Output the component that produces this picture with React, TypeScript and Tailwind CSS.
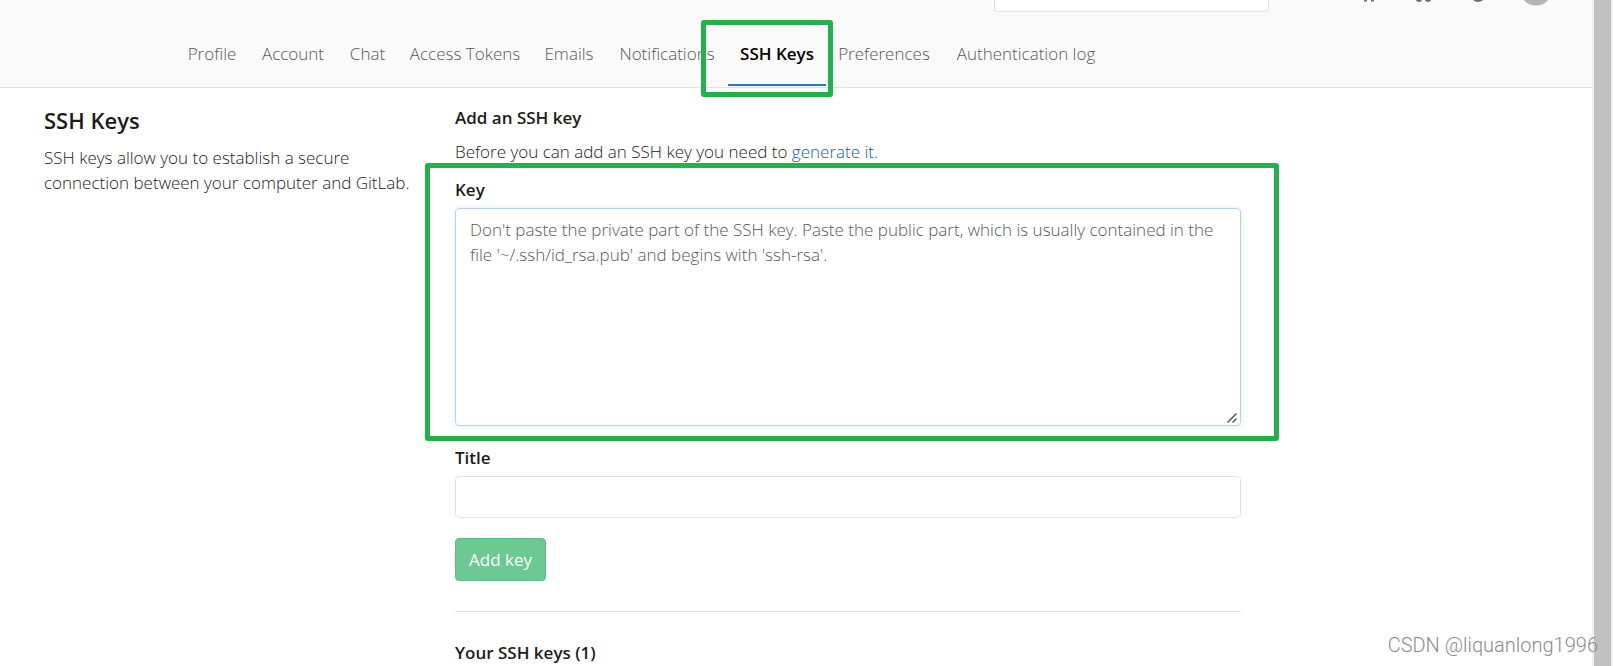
import type { ReactNode } from 'react'

const tabs = [
  { label: 'Profile', width: 'w-[74px]' },
  { label: 'Account', width: 'w-[88px]' },
  { label: 'Chat', width: 'w-[61px]' },
  { label: 'Access Tokens', width: 'w-[134px]' },
  { label: 'Emails', width: 'w-[74px]' },
  { label: 'Notifications', width: 'w-[122px]' },
  { label: 'SSH Keys', width: 'w-[98px]', active: true },
  { label: 'Preferences', width: 'w-[116px]' },
  { label: 'Authentication log', width: 'w-[168px]' },
]

export default function App() {
  return (
    <div className="flex min-h-screen bg-white font-['Segoe_UI','Open_Sans',sans-serif] text-[17px] font-light leading-[25px] text-[#1c1c1c]">
      <div className="relative min-w-0 flex-1">
        <header className="border-b border-[#e1e1e1] bg-[#fafafa]">
          <TopBar />
          <nav className="flex h-[75px] pl-[175px]">
            {tabs.map((tab) => (
              <a
                key={tab.label}
                href="#"
                className={`relative flex shrink-0 justify-center whitespace-nowrap pt-[29px] ${tab.width} ${
                  tab.active ? 'font-semibold text-black' : 'text-[#585858]'
                }`}
              >
                {tab.label}
                {tab.active && (
                  <>
                    <span className="absolute inset-x-0 bottom-px h-0.5 bg-[#1f78d1]" />
                    <Highlight className="-bottom-2.5 -left-[27px] -right-[7px] top-2" />
                  </>
                )}
              </a>
            ))}
          </nav>
        </header>

        <main className="flex pl-11">
          <section className="w-[411px] shrink-0 pt-[18px]">
            <h4 className="text-[22px] font-semibold leading-7">SSH Keys</h4>
            <p className="mt-[11px] w-[380px]">
              SSH keys allow you to establish a secure connection between your
              computer and GitLab.
            </p>
          </section>
          <section className="w-[786px] pt-[17px]">
            <h5 className="font-semibold">Add an SSH key</h5>
            <p className="mt-[9px]">
              Before you can add an SSH key you need to{' '}
              <a href="#" className="text-[#0f5cad]">
                generate it.
              </a>
            </p>
            <form>
              <div className="relative mt-[13px]">
                <Label htmlFor="key">Key</Label>
                <textarea
                  id="key"
                  className="mt-1.5 block h-[218px] w-full resize-none rounded-sm border border-[#b3d4f1] px-3.5 py-2 shadow-[0_0_4px_#d9e9f7] outline-none placeholder:text-[#585858]"
                  placeholder="Don't paste the private part of the SSH key. Paste the public part, which is usually contained in the file '~/.ssh/id_rsa.pub' and begins with 'ssh-rsa'."
                />
                <ResizeGrip />
                <Highlight className="-bottom-[15px] -left-[30px] -right-[38px] -top-3.5" />
              </div>
              <div className="mt-[19px]">
                <Label htmlFor="title">Title</Label>
                <input
                  id="title"
                  type="text"
                  className="mt-1.5 block h-[42px] w-full rounded-sm border border-[#e3e3e3] px-3.5 outline-none"
                />
              </div>
              <button
                type="button"
                className="mt-5 h-[43px] w-[91px] rounded-sm border border-[#60b985] bg-[#6bc991] font-normal text-white"
              >
                Add key
              </button>
            </form>
            <hr className="mt-[30px] border-[#e1e1e1]" />
            <h5 className="mt-7 font-semibold">Your SSH keys (1)</h5>
          </section>
        </main>

        <span className="absolute -right-1.5 bottom-2 z-10 whitespace-nowrap font-['Roboto',sans-serif] text-[20px] font-light text-[#8c8c8c]">
          CSDN @liquanlong1996
        </span>
      </div>

      <div className="flex w-[21px] shrink-0 bg-[#f1f1f1] px-0.5">
        <div className="flex-1 bg-[#c1c1c1]" />
      </div>
    </div>
  )
}

function TopBar() {
  return (
    <div className="flex h-3 items-start justify-end pr-11">
      <input
        type="search"
        aria-label="Search"
        className="h-3 w-[275px] rounded-b-sm border border-t-0 border-[#e3e3e3] bg-white outline-none"
      />
      <svg className="ml-[91px]" width="188" height="6" viewBox="0 0 188 6">
        <path d="M4 0h3v1.500h-3zM11 0h3v1.500h-3z" fill="#6f6f6f" />
        <path
          d="M56 0h6q-.5 2-3 2T56 0zM65 0h6q-.5 2-3 2T65 0z"
          fill="#6f6f6f"
        />
        <path d="M113 0h10q-2 2-5 2T113 0z" fill="#6f6f6f" />
        <path d="M164 0h24q-4 5.500-12 5.500T164 0z" fill="#b5b5b5" />
      </svg>
    </div>
  )
}

function Label({ htmlFor, children }: { htmlFor: string; children: ReactNode }) {
  return (
    <label htmlFor={htmlFor} className="block font-semibold">
      {children}
    </label>
  )
}

function ResizeGrip() {
  return (
    <svg
      className="pointer-events-none absolute bottom-[3px] right-1"
      width="10"
      height="10"
      viewBox="0 0 10 10"
      fill="none"
      stroke="#555"
      strokeWidth="1.5"
      aria-hidden="true"
    >
      <path d="M0.500 9.500 9.500 0.500M5.500 9.500l4-4" />
    </svg>
  )
}

// Green marker frame drawn around the part of the page being explained.
function Highlight({ className }: { className: string }) {
  return (
    <span
      className={`pointer-events-none absolute rounded-[3px] border-[5px] border-[#22b14c] ${className}`}
    />
  )
}
